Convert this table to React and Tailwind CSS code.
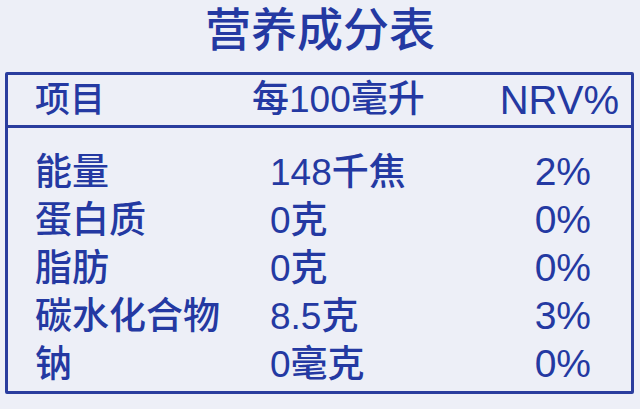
import React from "react";

const rows = [
  ["能量", "148千焦", "2%"],
  ["蛋白质", "0克", "0%"],
  ["脂肪", "0克", "0%"],
  ["碳水化合物", "8.5克", "3%"],
  ["钠", "0毫克", "0%"],
];

export default function App() {
  return (
    <div
      className="w-[640px] h-[409px] bg-[#edeff7] text-[#2439a2] overflow-hidden"
      style={{ fontFamily: '"Liberation Sans", "Noto Sans CJK SC", sans-serif' }}
    >
      <div className="pt-[7px] h-[72px] text-center text-[46px] leading-[46px] font-medium">
        营养成分表
      </div>
      <div className="mx-[5px] w-[629px] h-[322px] border-[3px] border-[#2a3d9e] rounded-[2px]">
        <div className="h-[53px] flex items-center pl-[27px] pr-[12px] text-[35px] font-medium border-b-[3px] border-[#2a3d9e]">
          <div className="w-[217px]">项目</div>
          <div className="flex-1 text-[37px]">每100毫升</div>
          <div className="text-[40px]">NRV%</div>
        </div>
        <div className="pt-[15px] pl-[27px] pr-[40px]">
          {rows.map((r) => (
            <div
              key={r[0]}
              className="h-[48px] grid grid-cols-[235px_1fr_auto] items-center text-[37px] font-medium"
            >
              <div>{r[0]}</div>
              <div>{r[1]}</div>
              <div className="text-right text-[39px]">{r[2]}</div>
            </div>
          ))}
        </div>
      </div>
    </div>
  );
}
